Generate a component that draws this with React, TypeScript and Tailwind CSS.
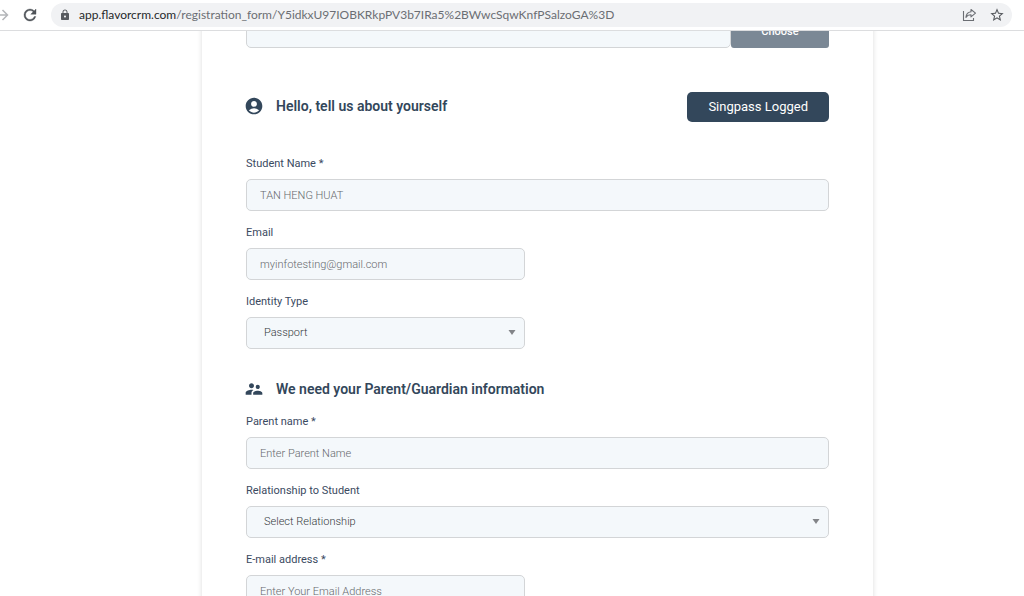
import React from 'react';
import { MdAccountCircle, MdLock, MdStarBorder, MdSupervisorAccount } from 'react-icons/md';

const control =
  'block h-8 w-full rounded-[5px] border border-[#d3d5d7] bg-[#f4f8fb] text-[11px] font-light outline-none';

type FieldProps = { id: string; label: string; half?: boolean; children: React.ReactNode };

function Field({ id, label, half, children }: FieldProps) {
  return (
    <div className={half ? 'col-span-1' : 'col-span-2'}>
      <label htmlFor={id} className="mb-[5px] block text-[11px] leading-5 text-[#3b4a5f]">
        {label}
      </label>
      {children}
    </div>
  );
}

type InputProps = { id: string; type?: string; value?: string; placeholder?: string };

function TextInput({ id, type = 'text', value, placeholder }: InputProps) {
  return (
    <input
      id={id}
      type={type}
      defaultValue={value}
      placeholder={placeholder}
      className={`${control} px-[13px] text-[#66696d] placeholder:text-[#66696d] placeholder:opacity-100`}
    />
  );
}

function SelectInput({ id, options }: { id: string; options: string[] }) {
  return (
    <div className="relative">
      <select id={id} className={`${control} appearance-none px-[17px] text-[#35383c]`}>
        {options.map((o) => (
          <option key={o}>{o}</option>
        ))}
      </select>
      <svg className="pointer-events-none absolute top-[13px] right-[9px] h-[5px] w-2" viewBox="0 0 8 5" aria-hidden="true">
        <path d="M0.5 0h7L4 5z" fill="#828488" />
      </svg>
    </div>
  );
}

function SectionTitle({ icon, children }: { icon: React.ReactNode; children: React.ReactNode }) {
  return (
    <h2 className="flex items-center gap-3 text-sm leading-7 font-semibold text-[#33475b]">
      {icon}
      {children}
    </h2>
  );
}

function BrowserBar() {
  return (
    <header className="relative z-10 flex shrink-0 items-center gap-3 border-b border-[#dcdddf] bg-white py-[3px] pr-3">
      <button type="button" aria-label="Forward" className="-ml-1 text-[#b4b6b9]">
        <svg width="13" height="12" viewBox="0 0 13 12" fill="none" stroke="currentColor" strokeWidth="1.5">
          <path d="M0 6h11.5M6.5 1l5 5-5 5" />
        </svg>
      </button>
      <button type="button" aria-label="Reload" className="text-[#4f5358]">
        <svg width="18" height="18" viewBox="0 0 24 24" fill="currentColor" stroke="currentColor" strokeWidth="0.5">
          <path d="M17.65 6.35A7.96 7.96 0 0 0 12 4a8 8 0 1 0 7.73 10h-2.08A5.99 5.99 0 0 1 12 18a6 6 0 1 1 0-12c1.66 0 3.14.69 4.22 1.78L13 11h7V4z" />
        </svg>
      </button>
      <div className="flex h-6 min-w-0 flex-1 items-center rounded-full bg-[#f1f2f4] pr-[7px] pl-2">
        <MdLock size={12} className="shrink-0 text-[#56595e]" />
        <div className="min-w-0 flex-1 truncate pl-2 font-[Lato,sans-serif] text-xs text-[#6b6e73]">
          <span className="text-[#26282b]">app.flavorcrm.com</span>
          /registration_form/Y5idkxU97IOBKRkpPV3b7IRa5%2BWwcSqwKnfPSalzoGA%3D
        </div>
        <button type="button" aria-label="Share" className="mr-3 text-[#6b6e73]">
          <svg width="15" height="14" viewBox="0 0 15 14" fill="none" stroke="currentColor" strokeWidth="1.1">
            <path d="M1.5 3v9.5h10V10" />
            <path d="M9 1.5l4.5 3.7L9 8.9V6.8C6.5 6.8 5 7.6 3.9 9.4 4.2 6.3 5.9 4.1 9 3.7z" strokeLinejoin="round" />
          </svg>
        </button>
        <button type="button" aria-label="Bookmark" className="text-[#56595e]">
          <MdStarBorder size={16} />
        </button>
      </div>
    </header>
  );
}

export default function App() {
  return (
    <div className="flex h-screen flex-col overflow-hidden bg-white font-[Roboto,sans-serif]">
      <BrowserBar />
      <main className="min-h-0 flex-1 overflow-hidden">
        <form className="-mt-[15px] mr-[151px] ml-[202px] px-11 pb-10 shadow-[0_0_4px_1px_rgba(0,0,0,0.1)]">
          <div className="flex">
            <input
              type="text"
              aria-label="File"
              readOnly
              className="h-8 min-w-0 flex-1 rounded-[5px] border border-[#d3d5d7] bg-[#f4f8fb] px-3 text-[11px]"
            />
            <button type="button" className="h-8 w-[98px] rounded-[3px] bg-[#7b8895] text-[11px] font-medium text-white">
              Choose
            </button>
          </div>

          <div className="mt-11 flex items-start justify-between">
            <SectionTitle icon={<MdAccountCircle size={20} className="-ml-0.5" />}>
              Hello, tell us about yourself
            </SectionTitle>
            <button type="button" className="h-[30px] rounded-[5px] bg-[#33475b] px-[21px] text-[13px] text-white">
              Singpass Logged
            </button>
          </div>

          <div className="mt-8 grid grid-cols-2 gap-x-[26px] gap-y-3">
            <Field id="student-name" label="Student Name *">
              <TextInput id="student-name" value="TAN HENG HUAT" />
            </Field>
            <Field id="student-email" label="Email" half>
              <TextInput id="student-email" type="email" value="myinfotesting@gmail.com" />
            </Field>
            <div className="col-span-2 grid grid-cols-2 gap-x-[26px]">
              <Field id="identity-type" label="Identity Type" half>
                <SelectInput id="identity-type" options={['Passport']} />
              </Field>
            </div>
          </div>

          <div className="mt-[26px]">
            <SectionTitle icon={<MdSupervisorAccount size={20} className="-ml-0.5" />}>
              We need your Parent/Guardian information
            </SectionTitle>
          </div>

          <div className="mt-[9px] grid grid-cols-2 gap-x-[26px] gap-y-3">
            <Field id="parent-name" label="Parent name *">
              <TextInput id="parent-name" placeholder="Enter Parent Name" />
            </Field>
            <Field id="relationship" label="Relationship to Student">
              <SelectInput id="relationship" options={['Select Relationship']} />
            </Field>
            <Field id="parent-email" label="E-mail address *" half>
              <TextInput id="parent-email" type="email" placeholder="Enter Your Email Address" />
            </Field>
          </div>
        </form>
      </main>
    </div>
  );
}
